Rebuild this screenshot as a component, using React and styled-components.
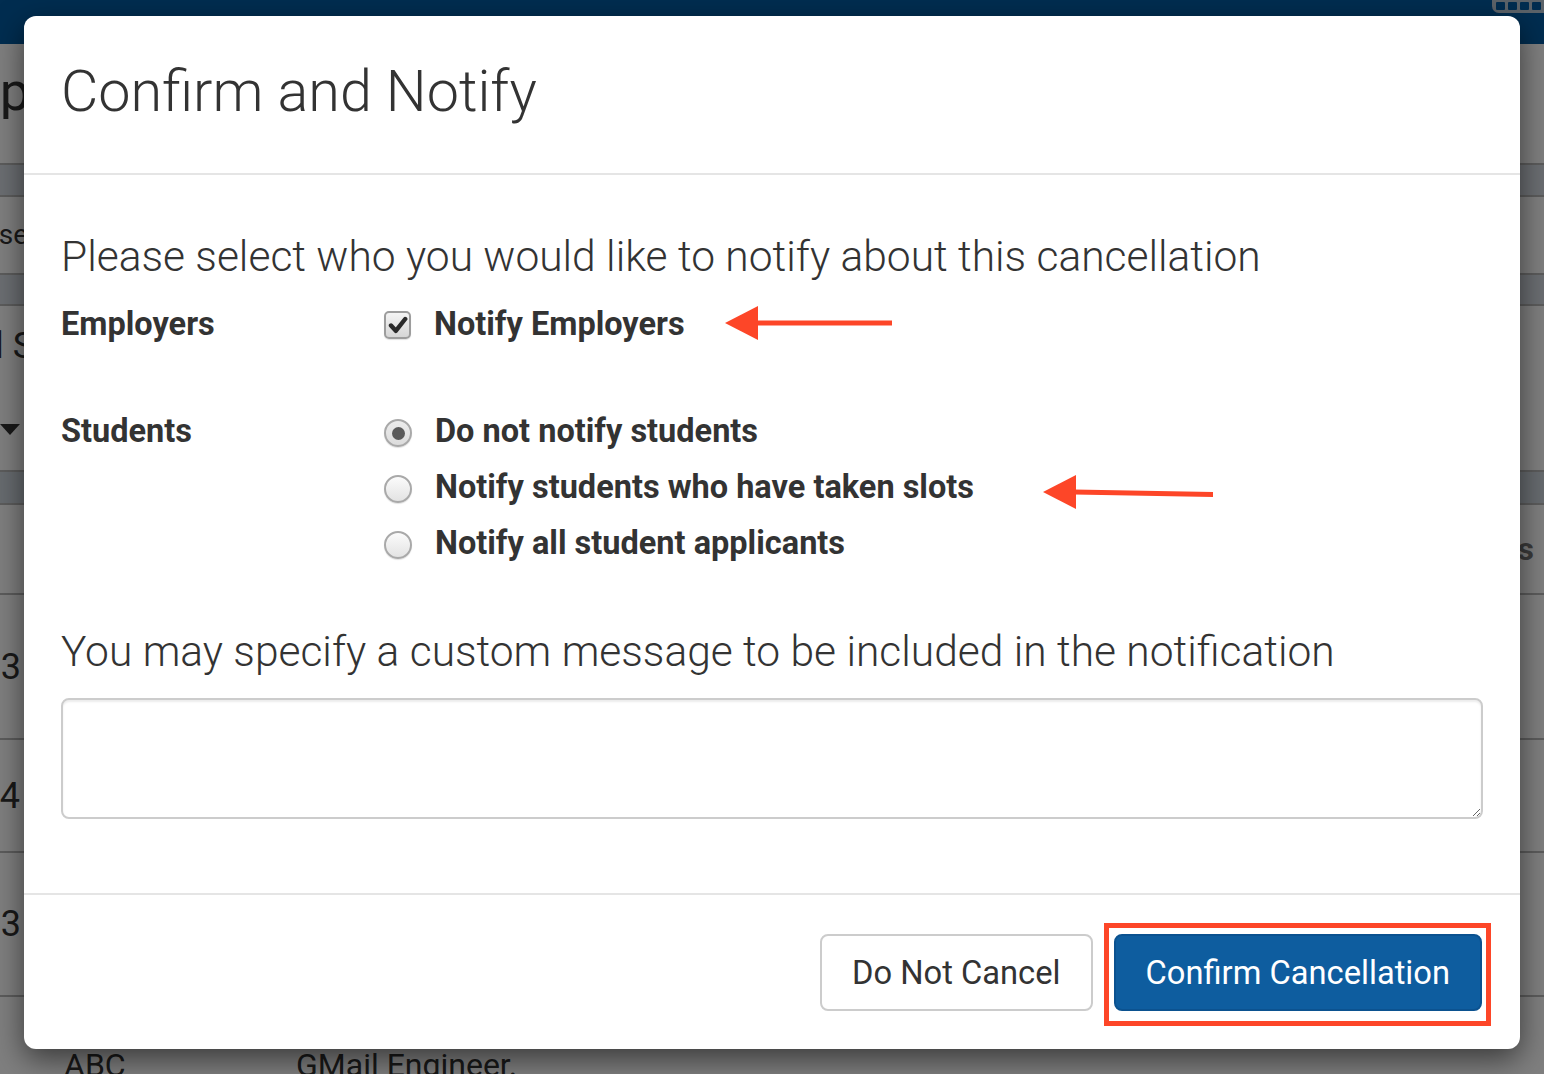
import React from "react";
import styled, { createGlobalStyle } from "styled-components";

const GlobalStyle = createGlobalStyle`
  html, body { margin: 0; padding: 0; }
  body {
    font-family: Roboto, "Liberation Sans", Arial, sans-serif;
    color: #333;
    width: 1544px;
    height: 1074px;
    overflow: hidden;
    background: #fff;
  }
  * { box-sizing: border-box; }
`;

const Page = styled.div`
  position: relative;
  width: 1544px;
  height: 1074px;
  overflow: hidden;
  background: #fff;
`;

/* ---------- underlying page (dimmed by the backdrop) ---------- */
const BgPage = styled.div`
  display: flex;
  flex-direction: column;
`;

const NavBar = styled.div`
  height: 44px;
  background: #035aa1;
  display: flex;
  justify-content: flex-end;
  align-items: flex-start;
`;

const AppsIcon = styled.div`
  display: flex;
  gap: 3px;
  padding: 2px 3px 3px 4px;
  background: #b9c6d3;
  border-radius: 0 0 0 7px;
`;

const AppsSquare = styled.span`
  width: 9px;
  height: 8px;
  background: #035aa1;
  border-radius: 1px;
`;

const BgRow = styled.div`
  height: ${(p) => p.$h}px;
  flex: none;
  border-top: ${(p) => (p.$noLine ? "none" : "2px solid #b9b9b9")};
  background: ${(p) => p.$bg || "#fff"};
  display: flex;
  justify-content: space-between;
  align-items: ${(p) => (p.$pt != null ? "flex-start" : "center")};
  padding-top: ${(p) => p.$pt || 0}px;
`;

const PeekLeft = styled.div`
  width: 24px;
  flex: none;
  overflow: hidden;
  display: flex;
  flex-direction: column;
  align-items: flex-end;
  gap: ${(p) => p.$gap || 0}px;
  white-space: nowrap;
`;

const PeekRight = styled.div`
  width: 24px;
  flex: none;
  overflow: hidden;
  display: flex;
  justify-content: flex-end;
  padding-right: ${(p) => p.$pr || 0}px;
  white-space: nowrap;
`;

const PeekText = styled.span`
  font-size: ${(p) => p.$size}px;
  line-height: 1;
  font-weight: ${(p) => p.$weight || 400};
  color: ${(p) => p.$color || "#333"};
  margin-right: ${(p) => p.$shift || 0}px;
`;

const Caret = styled.span`
  width: 0;
  height: 0;
  border-left: 10px solid transparent;
  border-right: 10px solid transparent;
  border-top: 11px solid #333;
  margin-right: 4px;
`;

const TableCells = styled.div`
  display: flex;
  padding-left: 64px;
  font-size: 32px;
  line-height: 40px;
  color: #333;
`;

const Cell = styled.span`
  width: ${(p) => p.$w}px;
  flex: none;
`;

const Backdrop = styled.div`
  position: absolute;
  inset: 0;
  background: rgba(0, 0, 0, 0.5);
`;

/* ---------- modal ---------- */
const Modal = styled.div`
  position: absolute;
  top: 16px;
  left: 24px;
  width: 1496px;
  background: #fff;
  border-radius: 12px;
  box-shadow: 0 10px 30px rgba(0, 0, 0, 0.55);
`;

const Header = styled.div`
  padding: 43px 37px 48px;
  border-bottom: 2px solid #e5e5e5;
`;

const Title = styled.h4`
  margin: 0;
  font-size: 57.5px;
  line-height: 66px;
  font-weight: 300;
  color: #333;
`;

const Body = styled.div`
  padding: 57px 37px 74px;
  display: flex;
  flex-direction: column;
`;

const Prompt = styled.p`
  margin: ${(p) => p.$mt || 0}px 0 0;
  font-size: 42.5px;
  line-height: 50px;
  font-weight: 300;
  color: #333;
`;

const FieldRow = styled.div`
  margin-top: ${(p) => p.$mt}px;
  display: grid;
  grid-template-columns: 323px 1fr;
`;

const FieldLabel = styled.div`
  font-size: 32.5px;
  line-height: 56px;
  font-weight: 700;
  color: #333;
`;

const Controls = styled.div`
  display: flex;
  flex-direction: column;
`;

const Option = styled.label`
  position: relative;
  height: 56px;
  display: flex;
  align-items: center;
  gap: 23px;
`;

const OptionText = styled.span`
  font-size: 32.5px;
  line-height: 56px;
  font-weight: 700;
  color: #333;
`;

const CheckBox = styled.span`
  width: 27px;
  height: 28px;
  flex: none;
  margin-top: 2px;
  border: 2px solid #9d9d9d;
  border-radius: 5px;
  background: linear-gradient(#f4f4f4, #d6d6d6);
  box-shadow: 0 1px 1px rgba(0, 0, 0, 0.12);
  display: flex;
  align-items: center;
  justify-content: center;
`;

const Radio = styled.span`
  width: 28px;
  height: 28px;
  flex: none;
  margin-top: 4px;
  border: 2px solid #a9a9a9;
  border-radius: 50%;
  background: ${(p) =>
    p.$checked ? "linear-gradient(#ececec, #dcdcdc)" : "linear-gradient(#fbfbfb, #e3e3e3)"};
  box-shadow: 0 1px 1px rgba(0, 0, 0, 0.12);
  display: flex;
  align-items: center;
  justify-content: center;
`;

const RadioDot = styled.span`
  width: 13px;
  height: 13px;
  border-radius: 50%;
  background: #5a5a5a;
`;

const ArrowMark = styled.svg`
  position: absolute;
  left: ${(p) => p.$left}px;
  top: ${(p) => p.$top}px;
  overflow: visible;
`;

const MessageBox = styled.textarea`
  display: block;
  margin-top: 21px;
  width: 100%;
  height: 121px;
  border: 2px solid #cccccc;
  border-radius: 8px;
  box-shadow: inset 0 2px 2px rgba(0, 0, 0, 0.075);
  resize: vertical;
  font-family: inherit;
  font-size: 30px;
  padding: 12px 24px;
  outline: none;
`;

const Footer = styled.div`
  border-top: 2px solid #e5e5e5;
  padding: 39px 38px 38px;
  display: flex;
  justify-content: flex-end;
  align-items: center;
  gap: 21px;
`;

const Button = styled.button`
  height: 77px;
  padding: 0 30px;
  font-family: Roboto, "Liberation Sans", Arial, sans-serif;
  font-size: 32.7px;
  font-weight: 400;
  border-radius: 8px;
  cursor: pointer;
  border: 2px solid ${(p) => (p.$primary ? "#0b5290" : "#cccccc")};
  background: ${(p) => (p.$primary ? "#0e5d9f" : "#fff")};
  color: ${(p) => (p.$primary ? "#fff" : "#333")};
`;

const Highlight = styled.span`
  position: relative;
  display: inline-flex;
  &::after {
    content: "";
    position: absolute;
    top: -11px;
    left: -10px;
    right: -9px;
    bottom: -15px;
    border: 5px solid #fd4628;
    pointer-events: none;
  }
`;

function Arrow({ left, top, width, tilt = 0 }) {
  const h = 34;
  const mid = 17;
  return (
    <ArrowMark $left={left} $top={top} width={width} height={h} viewBox={`0 0 ${width} ${h}`}>
      <polygon points={`0,${mid} 33,0 33,${h}`} fill="#fd4628" />
      <polygon
        points={`31,${mid - 2.6} ${width},${mid - 2.6 + tilt} ${width},${mid + 2.6 + tilt} 31,${mid + 2.6}`}
        fill="#fd4628"
      />
    </ArrowMark>
  );
}

function CheckMark() {
  return (
    <svg width="20" height="18" viewBox="0 0 20 18">
      <path d="M3 9.5 L7.8 14.8 L17.2 3" fill="none" stroke="#2a2a2a" strokeWidth="4.4" strokeLinecap="round" strokeLinejoin="round" />
    </svg>
  );
}

export default function App() {
  return (
    <Page>
      <GlobalStyle />
      <BgPage>
        <NavBar>
          <AppsIcon>
            <AppsSquare />
            <AppsSquare />
            <AppsSquare />
            <AppsSquare />
          </AppsIcon>
        </NavBar>
        <BgRow $h={119} $noLine $pt={21}>
          <PeekLeft>
            <PeekText $size={54} $shift={-6}>Comp</PeekText>
          </PeekLeft>
        </BgRow>
        <BgRow $h={32} $bg="#d6dde5" />
        <BgRow $h={78} $pt={24}>
          <PeekLeft>
            <PeekText $size={28} $shift={-4}>Use</PeekText>
          </PeekLeft>
        </BgRow>
        <BgRow $h={31} $bg="#d6dde5" />
        <BgRow $h={166} $pt={22}>
          <PeekLeft $gap={60}>
            <PeekText $size={36} $shift={-10}>All S</PeekText>
            <Caret />
          </PeekLeft>
        </BgRow>
        <BgRow $h={33} $bg="#cfd6de" />
        <BgRow $h={90}>
          <PeekLeft />
          <PeekRight $pr={10}>
            <PeekText $size={32} $weight={700} $color="#777">Status</PeekText>
          </PeekRight>
        </BgRow>
        <BgRow $h={145}>
          <PeekLeft>
            <PeekText $size={36} $shift={3}>2013</PeekText>
          </PeekLeft>
        </BgRow>
        <BgRow $h={113}>
          <PeekLeft>
            <PeekText $size={36} $shift={4}>2014</PeekText>
          </PeekLeft>
        </BgRow>
        <BgRow $h={144}>
          <PeekLeft>
            <PeekText $size={36} $shift={3}>2013</PeekText>
          </PeekLeft>
        </BgRow>
        <BgRow $h={120} $pt={48}>
          <TableCells>
            <Cell $w={232}>ABC</Cell>
            <Cell $w={600}>GMail Engineer.</Cell>
          </TableCells>
        </BgRow>
      </BgPage>

      <Backdrop />

      <Modal role="dialog" aria-labelledby="modal-title">
        <Header>
          <Title id="modal-title">Confirm and Notify</Title>
        </Header>
        <Body>
          <Prompt>Please select who you would like to notify about this cancellation</Prompt>
          <FieldRow $mt={14}>
            <FieldLabel>Employers</FieldLabel>
            <Controls>
              <Option>
                <CheckBox role="checkbox" aria-checked="true">
                  <CheckMark />
                </CheckBox>
                <OptionText>Notify Employers</OptionText>
                <Arrow left={341} top={10} width={167} />
              </Option>
            </Controls>
          </FieldRow>
          <FieldRow $mt={51}>
            <FieldLabel>Students</FieldLabel>
            <Controls>
              <Option>
                <Radio $checked role="radio" aria-checked="true">
                  <RadioDot />
                </Radio>
                <OptionText>Do not notify students</OptionText>
              </Option>
              <Option>
                <Radio role="radio" aria-checked="false" />
                <OptionText>Notify students who have taken slots</OptionText>
                <Arrow left={659} top={16} width={170} tilt={2.5} />
              </Option>
              <Option>
                <Radio role="radio" aria-checked="false" />
                <OptionText>Notify all student applicants</OptionText>
              </Option>
            </Controls>
          </FieldRow>
          <Prompt $mt={56}>
            You may specify a custom message to be included in the notification
          </Prompt>
          <MessageBox aria-label="Custom message" />
        </Body>
        <Footer>
          <Button>Do Not Cancel</Button>
          <Highlight>
            <Button $primary>Confirm Cancellation</Button>
          </Highlight>
        </Footer>
      </Modal>
    </Page>
  );
}
